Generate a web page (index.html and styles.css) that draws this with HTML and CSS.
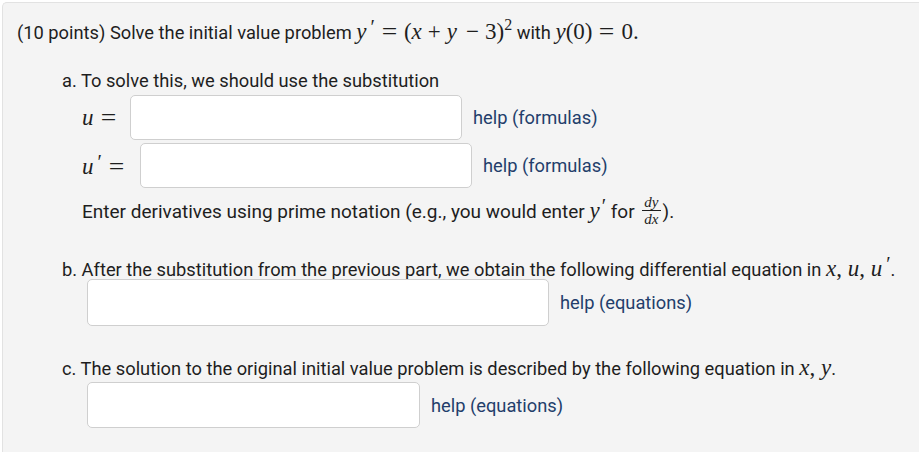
FILE: index.html
```html
<!DOCTYPE html>
<html>
<head>
<meta charset="utf-8">
<link rel="stylesheet" href="styles.css">
</head>
<body>
<div class="problem">
  <div class="title">(10 points) Solve the initial value problem <span class="m"><i>y</i><span class="pr">′</span><span class="op">=</span>(<i>x</i><span class="op sm">+</span><i>y</i><span class="op sm mi">−</span>3)<sup>2</sup></span> with <span class="m"><i>y</i>(0)<span class="op">=</span>0.</span></div>

  <div class="part part-a">a. To solve this, we should use the substitution</div>
  <div class="row row-u">
    <span class="lbl m"><i>u</i><span class="op">=</span></span>
    <div class="box box-a"></div>
    <a class="help">help (formulas)</a>
  </div>
  <div class="row row-up">
    <span class="lbl m"><i>u</i><span class="pr">′</span><span class="op">=</span></span>
    <div class="box box-a"></div>
    <a class="help">help (formulas)</a>
  </div>
  <div class="note">Enter derivatives using prime notation (e.g., you would enter <span class="m"><i>y</i><span class="pr">′</span></span> for <span class="frac"><span class="num"><i>dy</i></span><span class="den"><i>dx</i></span></span>).</div>

  <div class="part part-b">b. After the substitution from the previous part, we obtain the following differential equation in <span class="m"><i>x</i>, <i>u</i>, <i>u</i><span class="pr">′</span></span>.</div>
  <div class="row row-b">
    <div class="box box-b"></div>
    <a class="help">help (equations)</a>
  </div>

  <div class="part part-c">c. The solution to the original initial value problem is described by the following equation in <span class="m"><i>x</i>, <i>y</i></span>.</div>
  <div class="row row-c">
    <div class="box box-c"></div>
    <a class="help">help (equations)</a>
  </div>
</div>
</body>
</html>
```

FILE: styles.css
```css
html, body {
  margin: 0;
  padding: 0;
  background: #ffffff;
}
body {
  font-family: Roboto, "Liberation Sans", sans-serif;
  font-size: 18.3px;
  color: #1e1e1e;
  overflow: hidden;
  height: 452px;
}
.problem {
  margin: 2px 0 0 2px;
  border: 1px solid #e2e2e2;
  border-right: none;
  border-radius: 5px 0 0 0;
  background: #f4f4f4;
  padding: 12px 0 40px 14px;
  height: 460px;
}
.title {
  line-height: 24px;
  height: 24px;
}
.m {
  font-family: "Liberation Serif", "DejaVu Serif", serif;
  font-size: 23px;
  white-space: nowrap;
}
.m i {
  font-style: italic;
}
.m sup {
  font-size: 16px;
  vertical-align: 9px;
  line-height: 0;
}
.pr {
  display: inline-block;
  margin-left: 4px;
  font-size: 20px;
  vertical-align: 5px;
}
.note .pr {
  margin-left: 2px;
}
.op {
  display: inline-block;
  margin: 0 8px;
  transform: scaleX(1.2);
}
.op.sm {
  margin: 0 6px;
  transform: none;
}
.op.mi {
  margin-left: 9px;
}
.part {
  margin-left: 45px;
  line-height: 24px;
  height: 24px;
}
.part-a { margin-top: 30px; }
.part-b { margin-top: 34px; }
.part-c { margin-top: 30px; }
.row {
  display: flex;
  align-items: center;
  margin-left: 65px;
}
.row-u { margin-top: 2px; }
.row-up { margin-top: 3px; }
.row-b, .row-c { margin-left: 70px; }
.row-b { margin-top: 3px; }
.row-c { margin-top: 2px; }
.lbl {
  display: inline-block;
}
.lbl .op { margin-right: 0; }
.row-u .lbl { width: 48px; }
.row-up .lbl { width: 58px; }
.box {
  background: #ffffff;
  border: 1px solid #cfcfcf;
  border-radius: 5px;
  height: 45px;
  box-sizing: border-box;
}
.box-a { width: 332px; }
.box-b { width: 462px; height: 47px; }
.box-c { width: 333px; height: 46px; }
.help {
  color: #233e6b;
  margin-left: 11px;
  text-decoration: none;
}
.note {
  margin-left: 65px;
  margin-top: 6px;
  line-height: 24px;
  height: 24px;
  font-size: 19px;
}
.frac {
  display: inline-flex;
  flex-direction: column;
  align-items: center;
  vertical-align: middle;
  font-family: "Liberation Serif", "DejaVu Serif", serif;
  font-size: 15px;
  line-height: 16px;
  margin: -5px 2px 0 3px;
}
.frac .num {
  border-bottom: 1px solid #1e1e1e;
  padding: 0 2px;
}
.frac .den {
  padding: 0 2px;
}
```
